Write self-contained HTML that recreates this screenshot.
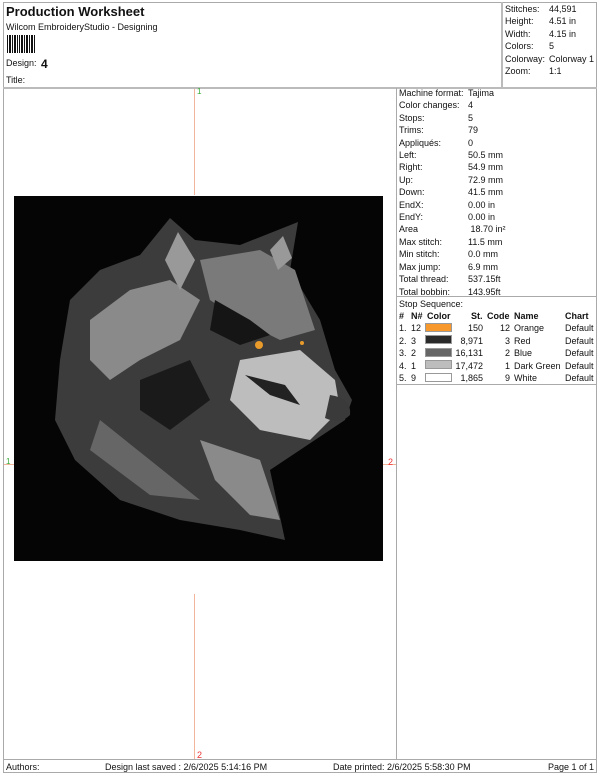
<!DOCTYPE html>
<html><head><style>
*{margin:0;padding:0;box-sizing:border-box}
body{width:600px;height:776px;background:#fff;font-family:"Liberation Sans",sans-serif;font-size:9px;color:#111;position:relative;overflow:hidden}
.a{position:absolute;white-space:nowrap}
.l{position:absolute;background:#aaa}
.r div{position:absolute;white-space:nowrap}
</style></head><body>
<div class="l" style="left:3px;top:2px;width:594px;height:1px"></div>
<div class="l" style="left:3px;top:2px;width:1px;height:771px"></div>
<div class="l" style="left:596px;top:2px;width:1px;height:771px"></div>
<div class="l" style="left:3px;top:772px;width:594px;height:1px"></div>
<div class="l" style="left:3px;top:87px;width:594px;height:2px;background:#bbb"></div>
<div class="l" style="left:501px;top:2px;width:2px;height:86px;background:#bbb"></div>
<div class="l" style="left:396px;top:88px;width:1px;height:671px"></div>
<div class="l" style="left:3px;top:759px;width:594px;height:1px"></div>
<div class="l" style="left:396px;top:296px;width:201px;height:1px"></div>
<div class="l" style="left:396px;top:384px;width:201px;height:1px"></div>

<div class="a" style="left:6px;top:4px;font-size:13px;font-weight:bold">Production Worksheet</div>
<div class="a" style="left:6px;top:22px">Wilcom EmbroideryStudio - Designing</div>
<svg class="a" style="left:7px;top:35px" width="30" height="18"><g fill="#111">
<rect x="0" width="1" height="18"/><rect x="2" width="2" height="18"/><rect x="5" width="1" height="18"/><rect x="7" width="2" height="18"/><rect x="10" width="1" height="18"/><rect x="12" width="1" height="18"/><rect x="14" width="2" height="18"/><rect x="17" width="1" height="18"/><rect x="19" width="2" height="18"/><rect x="22" width="1" height="18"/><rect x="24" width="2" height="18"/><rect x="27" width="1" height="18"/></g></svg>
<div class="a" style="left:6px;top:58px">Design:</div>
<div class="a" style="left:41px;top:57px;font-size:12px;font-weight:bold">4</div>
<div class="a" style="left:6px;top:75px">Title:</div>

<div class="r">
<div style="left:505px;top:4px">Stitches:</div><div style="left:549px;top:4px">44,591</div>
<div style="left:505px;top:16px">Height:</div><div style="left:549px;top:16px">4.51 in</div>
<div style="left:505px;top:29px">Width:</div><div style="left:549px;top:29px">4.15 in</div>
<div style="left:505px;top:41px">Colors:</div><div style="left:549px;top:41px">5</div>
<div style="left:505px;top:54px">Colorway:</div><div style="left:549px;top:54px">Colorway 1</div>
<div style="left:505px;top:66px">Zoom:</div><div style="left:549px;top:66px">1:1</div>
</div>

<div class="r" style="line-height:12.4px">
<div style="left:399px;top:87px">Machine format:<br>Color changes:<br>Stops:<br>Trims:<br>Appliqués:<br>Left:<br>Right:<br>Up:<br>Down:<br>EndX:<br>EndY:<br>Area<br>Max stitch:<br>Min stitch:<br>Max jump:<br>Total thread:<br>Total bobbin:<br>Stop Sequence:</div>
<div style="left:468px;top:87px">Tajima<br>4<br>5<br>79<br>0<br>50.5 mm<br>54.9 mm<br>72.9 mm<br>41.5 mm<br>0.00 in<br>0.00 in<br>&nbsp;18.70 in²<br>11.5 mm<br>0.0 mm<br>6.9 mm<br>537.15ft<br>143.95ft</div>
</div>
<div class="r" style="font-weight:bold;text-decoration:underline">
<div style="left:399px;top:311px">#</div><div style="left:411px;top:311px">N#</div><div style="left:427px;top:311px">Color</div><div style="left:471px;top:311px">St.</div><div style="left:487px;top:311px">Code</div><div style="left:514px;top:311px">Name</div><div style="left:565px;top:311px">Chart</div>
</div>
<div class="r" style="line-height:12.5px">
<div style="left:399px;top:322px">1.<br>2.<br>3.<br>4.<br>5.</div>
<div style="left:411px;top:322px">12<br>3<br>2<br>1<br>9</div>
<div style="left:450px;top:322px;text-align:right;width:33px">150<br>8,971<br>16,131<br>17,472<br>1,865</div>
<div style="left:490px;top:322px;text-align:right;width:20px">12<br>3<br>2<br>1<br>9</div>
<div style="left:514px;top:322px">Orange<br>Red<br>Blue<br>Dark Green<br>White</div>
<div style="left:565px;top:322px">Default<br>Default<br>Default<br>Default<br>Default</div>
<div style="left:425px;top:323px;width:27px;height:9px;background:#f7982d;border:1px solid #999"></div>
<div style="left:425px;top:335px;width:27px;height:9px;background:#2a2a2a;border:1px solid #999"></div>
<div style="left:425px;top:348px;width:27px;height:9px;background:#666;border:1px solid #999"></div>
<div style="left:425px;top:360px;width:27px;height:9px;background:#bdbdbd;border:1px solid #999"></div>
<div style="left:425px;top:373px;width:27px;height:9px;background:#fff;border:1px solid #999"></div>
</div>

<div class="a" style="left:194px;top:89px;width:1px;height:106px;background:#f2b49a"></div>
<div class="a" style="left:194px;top:594px;width:1px;height:165px;background:#f2b49a"></div>
<div class="a" style="left:4px;top:464px;width:10px;height:1px;background:#f2b49a"></div>
<div class="a" style="left:383px;top:464px;width:13px;height:1px;background:#f2b49a"></div>
<div class="a" style="left:197px;top:87px;color:#3a3;font-size:8px">1</div>
<div class="a" style="left:197px;top:750px;color:#e33;font-size:9px">2</div>
<div class="a" style="left:6px;top:457px;color:#3a3;font-size:8px">1</div>
<div class="a" style="left:388px;top:457px;color:#e33;font-size:9px">2</div>

<svg class="a" style="left:14px;top:196px" width="369" height="365" viewBox="14 196 369 365">
<rect x="14" y="196" width="369" height="365" fill="#050505"/>
<path d="M70 300 L100 270 L140 255 L170 218 L195 240 L240 245 L298 222 L290 270 L320 320 L335 370 L352 400 L345 420 L300 450 L270 470 L285 540 L240 530 L180 520 L120 500 L75 460 L55 420 L60 360 Z" fill="#3c3c3c"/>
<path d="M90 320 L130 290 L170 280 L200 300 L180 340 L140 360 L110 380 L90 360 Z" fill="#8a8a8a"/>
<path d="M200 260 L260 250 L295 270 L315 330 L280 340 L240 320 L210 300 Z" fill="#7a7a7a"/>
<path d="M215 300 L250 320 L270 335 L240 345 L210 330 Z" fill="#151515"/>
<path d="M240 360 L300 350 L335 380 L340 410 L310 440 L260 430 L230 400 Z" fill="#bdbdbd"/>
<path d="M245 375 L285 385 L300 405 L270 395 Z" fill="#222"/>
<path d="M200 440 L260 460 L280 520 L250 515 L215 480 Z" fill="#8a8a8a"/>
<path d="M178 232 L195 260 L180 290 L165 260 Z" fill="#999"/>
<path d="M283 236 L292 258 L278 270 L270 250 Z" fill="#999"/>
<path d="M100 420 L150 460 L200 500 L150 495 L90 450 Z" fill="#666"/>
<path d="M140 380 L190 360 L210 400 L170 430 L140 410 Z" fill="#1a1a1a"/>
<path d="M330 395 Q352 398 350 415 Q340 425 325 418 Z" fill="#3a3a3a"/>
<circle cx="259" cy="345" r="4" fill="#e89a2a"/>
<circle cx="302" cy="343" r="2" fill="#e89a2a"/>
</svg>

<div class="a" style="left:6px;top:762px">Authors:</div>
<div class="a" style="left:105px;top:762px">Design last saved : 2/6/2025 5:14:16 PM</div>
<div class="a" style="left:333px;top:762px">Date printed: 2/6/2025 5:58:30 PM</div>
<div class="a" style="left:548px;top:762px">Page 1 of 1</div>
</body></html>
